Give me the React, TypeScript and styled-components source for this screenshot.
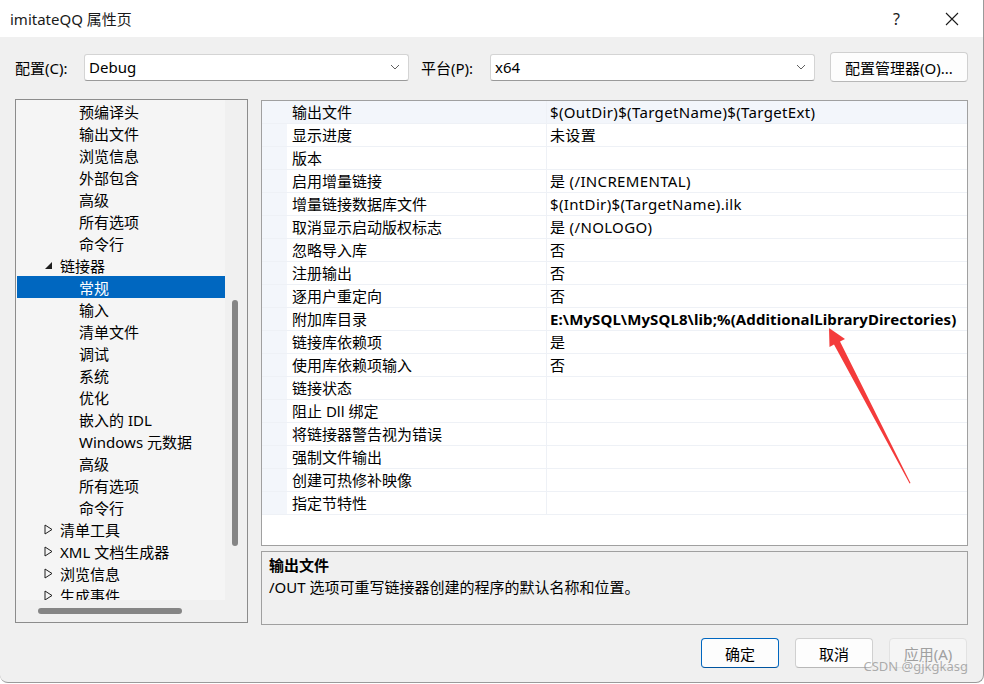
import React from 'react';
import styled, { createGlobalStyle } from 'styled-components';

const UI_FONT = `"Noto Sans", "Noto Sans CJK SC", sans-serif`;

type TreeItem = { label: string; level: 1 | 2; expand?: 'open' | 'closed'; selected?: boolean };

const treeItems: TreeItem[] = [
  { label: '预编译头', level: 2 },
  { label: '输出文件', level: 2 },
  { label: '浏览信息', level: 2 },
  { label: '外部包含', level: 2 },
  { label: '高级', level: 2 },
  { label: '所有选项', level: 2 },
  { label: '命令行', level: 2 },
  { label: '链接器', level: 1, expand: 'open' },
  { label: '常规', level: 2, selected: true },
  { label: '输入', level: 2 },
  { label: '清单文件', level: 2 },
  { label: '调试', level: 2 },
  { label: '系统', level: 2 },
  { label: '优化', level: 2 },
  { label: '嵌入的 IDL', level: 2 },
  { label: 'Windows 元数据', level: 2 },
  { label: '高级', level: 2 },
  { label: '所有选项', level: 2 },
  { label: '命令行', level: 2 },
  { label: '清单工具', level: 1, expand: 'closed' },
  { label: 'XML 文档生成器', level: 1, expand: 'closed' },
  { label: '浏览信息', level: 1, expand: 'closed' },
  { label: '生成事件', level: 1, expand: 'closed' },
];

type Prop = { name: string; value?: string; bold?: boolean };

const properties: Prop[] = [
  { name: '输出文件', value: '$(OutDir)$(TargetName)$(TargetExt)' },
  { name: '显示进度', value: '未设置' },
  { name: '版本' },
  { name: '启用增量链接', value: '是 (/INCREMENTAL)' },
  { name: '增量链接数据库文件', value: '$(IntDir)$(TargetName).ilk' },
  { name: '取消显示启动版权标志', value: '是 (/NOLOGO)' },
  { name: '忽略导入库', value: '否' },
  { name: '注册输出', value: '否' },
  { name: '逐用户重定向', value: '否' },
  { name: '附加库目录', value: 'E:\\MySQL\\MySQL8\\lib;%(AdditionalLibraryDirectories)', bold: true },
  { name: '链接库依赖项', value: '是' },
  { name: '使用库依赖项输入', value: '否' },
  { name: '链接状态' },
  { name: '阻止 Dll 绑定' },
  { name: '将链接器警告视为错误' },
  { name: '强制文件输出' },
  { name: '创建可热修补映像' },
  { name: '指定节特性' },
];

const Chevron = () => (
  <svg width="10" height="6" viewBox="0 0 10 6">
    <path d="M1 1 L5 5 L9 1" fill="none" stroke="#606060" strokeWidth="1" />
  </svg>
);

const ExpandIcon = ({ open }: { open: boolean }) =>
  open ? (
    <svg width="9" height="9" viewBox="0 0 9 9">
      <path d="M8 1 L8 8 L1 8 Z" fill="#1e1e1e" />
    </svg>
  ) : (
    <svg width="9" height="11" viewBox="0 0 9 11">
      <path d="M1 1 L8 5.5 L1 10 Z" fill="none" stroke="#1e1e1e" strokeWidth="1" />
    </svg>
  );

const App = () => {
  return (
    <>
      <GlobalStyle />
      <Window>
        <TitleBar>
          <TitleText>imitateQQ 属性页</TitleText>
          <TitleButtons>
            <HelpMark>?</HelpMark>
            <svg width="14" height="14" viewBox="0 0 14 14">
              <path d="M1 1 L13 13 M13 1 L1 13" stroke="#1a1a1a" strokeWidth="1.1" />
            </svg>
          </TitleButtons>
        </TitleBar>

        <Body>
          <ConfigRow>
            <Label>配置(C):</Label>
            <Combo>
              <span>Debug</span>
              <Chevron />
            </Combo>
            <Label $gap>平台(P):</Label>
            <Combo>
              <span>x64</span>
              <Chevron />
            </Combo>
            <ManagerButton>配置管理器(O)...</ManagerButton>
          </ConfigRow>

          <Main>
            <TreePanel>
              <TreeContent>
                {treeItems.map((item, i) => (
                  <TreeRow key={i} $level={item.level} $selected={item.selected}>
                    {item.expand && (
                      <ExpandBox>
                        <ExpandIcon open={item.expand === 'open'} />
                      </ExpandBox>
                    )}
                    {item.label}
                  </TreeRow>
                ))}
              </TreeContent>
              <VScroll>
                <VThumb />
              </VScroll>
              <HScroll>
                <HThumb />
              </HScroll>
              <Corner />
            </TreePanel>

            <RightColumn>
              <Grid>
                {properties.map((p, i) => (
                  <GridRow key={i} $active={i === 0}>
                    <Margin />
                    <NameCell>{p.name}</NameCell>
                    <ValueCell $bold={p.bold}>{p.value}</ValueCell>
                  </GridRow>
                ))}
              </Grid>
              <Description>
                <DescTitle>输出文件</DescTitle>
                <DescText>/OUT 选项可重写链接器创建的程序的默认名称和位置。</DescText>
              </Description>
            </RightColumn>
          </Main>

          <ButtonRow>
            <DialogButton $variant="default">确定</DialogButton>
            <DialogButton>取消</DialogButton>
            <DialogButton $variant="disabled">应用(A)</DialogButton>
          </ButtonRow>
        </Body>

        <Watermark>CSDN @gjkgkasg</Watermark>

        <Annotation width="984" height="684" viewBox="0 0 984 684">
          <polygon
            points="829,328 845,339 840,341.5 910.5,483 909.6,483.4 834,344.6 829.5,347"
            fill="#f43b3b"
          />
        </Annotation>
      </Window>
    </>
  );
};

export default App;

const GlobalStyle = createGlobalStyle`
  html, body {
    margin: 0;
    padding: 0;
    background: #ffffff;
  }
  * {
    box-sizing: border-box;
  }
`;

const Window = styled.div`
  position: relative;
  width: 984px;
  height: 683px;
  display: flex;
  flex-direction: column;
  background: #f0f0f0;
  border-right: 1px solid #9a9a9a;
  border-bottom: 1px solid #9a9a9a;
  border-radius: 0 0 8px 8px;
  overflow: hidden;
  font-family: ${UI_FONT};
  font-size: 15px;
  color: #000;
`;

const TitleBar = styled.div`
  height: 37px;
  flex-shrink: 0;
  display: flex;
  align-items: center;
  justify-content: space-between;
  padding: 0 24px 0 10px;
  background: #ffffff;
`;

const TitleText = styled.span`
  font-size: 15px;
  color: #1a1a1a;
`;

const TitleButtons = styled.div`
  display: flex;
  align-items: center;
  gap: 45px;
`;

const HelpMark = styled.span`
  font-size: 16px;
  color: #1a1a1a;
`;

const Body = styled.div`
  display: flex;
  flex-direction: column;
  padding: 15px 15px 0 15px;
`;

const ConfigRow = styled.div`
  height: 30px;
  display: flex;
  align-items: center;
`;

const Label = styled.span<{ $gap?: boolean }>`
  width: 69px;
  margin-left: ${({ $gap }) => ($gap ? '12px' : '0')};
  white-space: nowrap;
`;

const Combo = styled.div`
  width: 325px;
  height: 27px;
  display: flex;
  align-items: center;
  justify-content: space-between;
  padding: 0 8px 0 4px;
  background: #ffffff;
  border: 1px solid #d4d4d4;
  border-bottom-color: #9a9a9a;
  border-radius: 3px;
`;

const ManagerButton = styled.div`
  margin-left: 15px;
  width: 138px;
  height: 30px;
  display: flex;
  align-items: center;
  justify-content: center;
  background: #fdfdfd;
  border: 1px solid #d0d0d0;
  border-bottom-color: #b8b8b8;
  border-radius: 4px;
`;

const Main = styled.div`
  display: flex;
  gap: 13px;
  margin-top: 17px;
  align-items: flex-start;
`;

const TreePanel = styled.div`
  width: 233px;
  height: 524px;
  flex-shrink: 0;
  display: grid;
  grid-template-columns: 209px 22px;
  grid-template-rows: 500px 22px;
  border: 1px solid #8c8c8c;
  background: #f0f0f0;
`;

const TreeContent = styled.div`
  overflow: hidden;
  background: #f5f5f5;
`;

const TreeRow = styled.div<{ $level: 1 | 2; $selected?: boolean }>`
  height: 22px;
  display: flex;
  align-items: center;
  white-space: nowrap;
  padding-left: ${({ $level, $selected }) => ($level === 1 ? '28px' : $selected ? '62px' : '63px')};
  margin-left: ${({ $selected }) => ($selected ? '1px' : '0')};
  background: ${({ $selected }) => ($selected ? '#0067c0' : 'transparent')};
  color: ${({ $selected }) => ($selected ? '#ffffff' : '#000000')};
`;

const ExpandBox = styled.span`
  width: 16px;
  display: flex;
  align-items: center;
`;

const VScroll = styled.div`
  background: #f0f0f0;
  padding: 200px 0 0 7px;
`;

const VThumb = styled.div`
  width: 6px;
  height: 246px;
  background: #858585;
  border-radius: 3px;
`;

const HScroll = styled.div`
  background: #f0f0f0;
  padding: 8px 0 0 22px;
`;

const HThumb = styled.div`
  width: 144px;
  height: 6px;
  background: #858585;
  border-radius: 3px;
`;

const Corner = styled.div`
  background: #f0f0f0;
`;

const RightColumn = styled.div`
  flex: 1;
  margin-top: 1px;
  display: flex;
  flex-direction: column;
  gap: 5px;
`;

const Grid = styled.div`
  height: 446px;
  background: #ffffff;
  border: 1px solid #a0a0a0;
`;

const GridRow = styled.div<{ $active?: boolean }>`
  height: 23px;
  display: grid;
  grid-template-columns: 25px 259px 1fr;
  border-bottom: 1px solid #eef1f6;
  background: ${({ $active }) => ($active ? '#f3f6fb' : '#ffffff')};
`;

const Margin = styled.div`
  background: #f3f6fb;
`;

const NameCell = styled.div`
  padding-left: 5px;
  line-height: 22px;
  white-space: nowrap;
`;

const ValueCell = styled.div<{ $bold?: boolean }>`
  padding-left: 3px;
  line-height: 22px;
  white-space: nowrap;
  border-left: 1px solid #eef1f6;
  font-weight: ${({ $bold }) => ($bold ? 700 : 400)};
  letter-spacing: ${({ $bold }) => ($bold ? '0.1px' : '0.35px')};
`;

const Description = styled.div`
  height: 74px;
  border: 1px solid #a0a0a0;
  background: #f0f0f0;
  padding: 2px 7px;
`;

const DescTitle = styled.div`
  line-height: 22px;
  font-weight: 700;
`;

const DescText = styled.div`
  line-height: 22px;
`;

const ButtonRow = styled.div`
  display: flex;
  justify-content: flex-end;
  gap: 16px;
  margin-top: 13px;
  padding-right: 1px;
`;

const DialogButton = styled.div<{ $variant?: 'default' | 'disabled' }>`
  width: 78px;
  height: 30px;
  display: flex;
  align-items: center;
  justify-content: center;
  border-radius: 4px;
  background: ${({ $variant }) => ($variant === 'disabled' ? '#f5f5f5' : '#fdfdfd')};
  color: ${({ $variant }) => ($variant === 'disabled' ? '#a0a0a0' : '#000000')};
  border: 1px solid
    ${({ $variant }) =>
      $variant === 'default' ? '#0067c0' : $variant === 'disabled' ? '#e2e2e2' : '#d0d0d0'};
  border-bottom-color: ${({ $variant }) =>
    $variant === 'default' ? '#0054a0' : $variant === 'disabled' ? '#e2e2e2' : '#b8b8b8'};
`;

const Watermark = styled.span`
  position: absolute;
  right: 15px;
  bottom: 7px;
  font-size: 13px;
  color: rgba(140, 140, 140, 0.7);
`;

const Annotation = styled.svg`
  position: absolute;
  top: 0;
  left: 0;
  pointer-events: none;
`;
